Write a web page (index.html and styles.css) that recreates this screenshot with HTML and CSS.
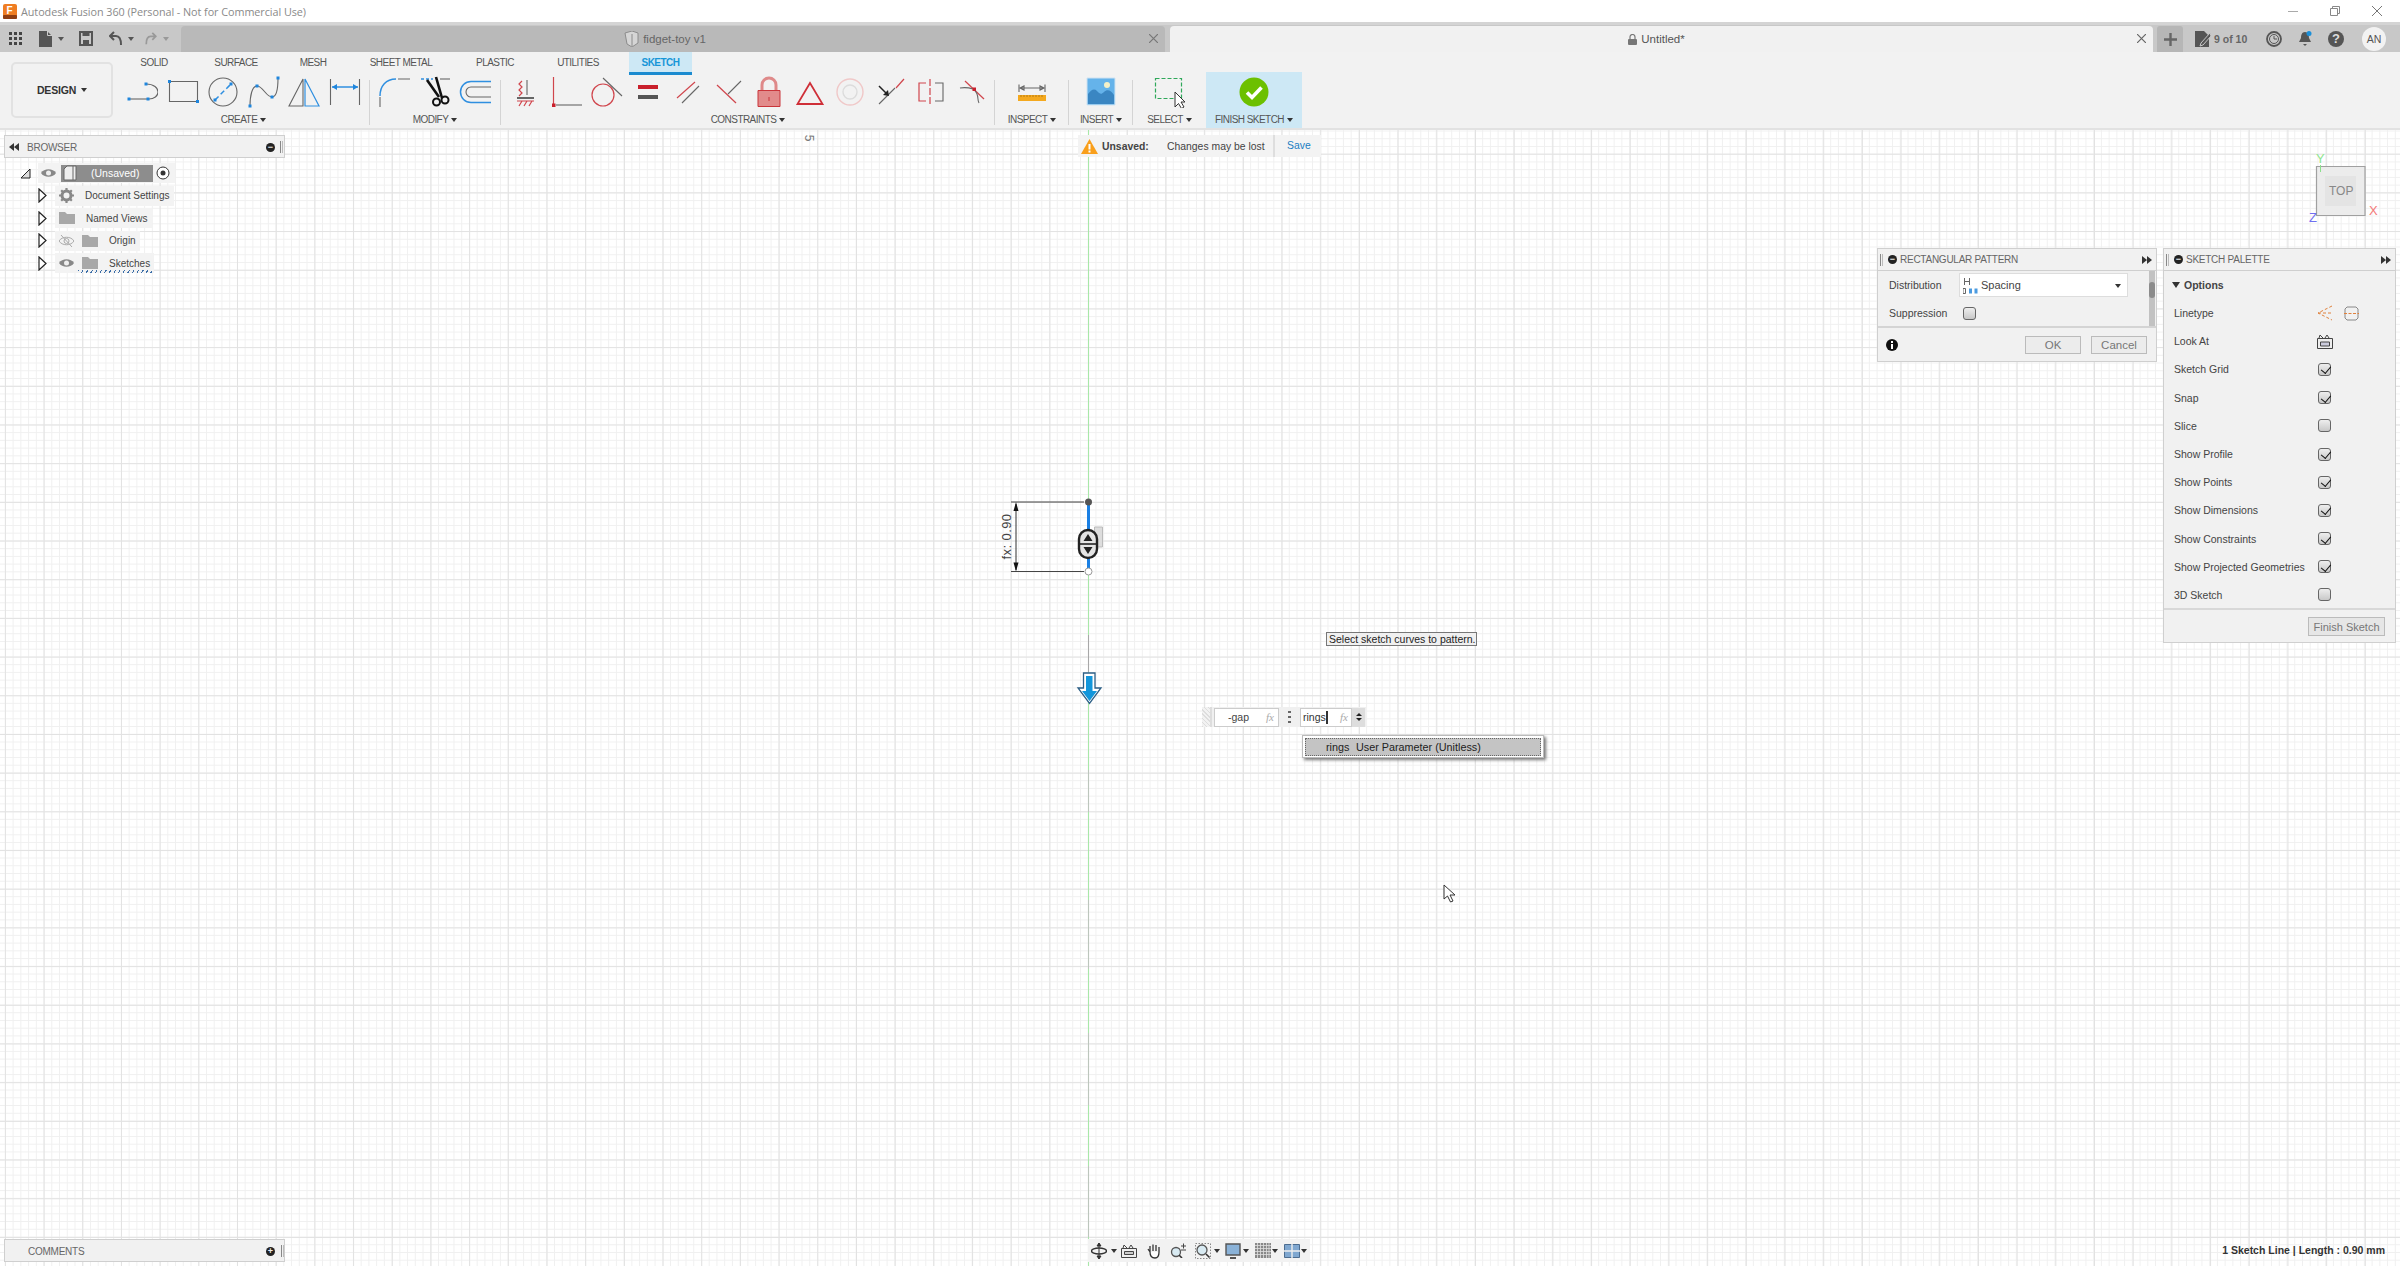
FILE: index.html
```html
<!DOCTYPE html>
<html lang="en">
<head>
<meta charset="utf-8">
<title>Autodesk Fusion 360</title>
<link rel="stylesheet" href="styles.css">
</head>
<body>
<div class="app">
  <header class="titlebar">
    <svg class="logo" width="14" height="15" viewBox="0 0 14 15"><rect width="14" height="15" rx="2" fill="#ef7d22"/><rect y="11" width="14" height="4" rx="1" fill="#8f3d12"/><text x="3.5" y="10" class="logo-f">F</text></svg>
    <span class="title-text">Autodesk Fusion 360 (Personal - Not for Commercial Use)</span>
    <div class="winctl">
      <svg width="10" height="10" viewBox="0 0 10 10"><path d="M0 5.5H10" stroke="#aaa" fill="none"/></svg>
      <svg width="10" height="10" viewBox="0 0 10 10"><path d="M.5 2.5h7v7h-7zM2.5 2.5v-2h7v7h-2" stroke="#888" fill="none"/></svg>
      <svg width="10" height="10" viewBox="0 0 10 10"><path d="M0 0L10 10M10 0L0 10" stroke="#777" fill="none"/></svg>
    </div>
  </header>

  <div class="tabstrip">
    <div class="qat">
      <svg class="q-grid" width="13" height="13" viewBox="0 0 13 13"><path d="M0 0h3v3H0zM5 0h3v3H5zM10 0h3v3h-3zM0 5h3v3H0zM5 5h3v3H5zM10 5h3v3h-3zM0 10h3v3H0zM5 10h3v3H5zM10 10h3v3h-3z" fill="#444"/></svg>
      <svg class="q-file" width="13" height="16" viewBox="0 0 13 16"><path d="M0 0h8l5 5v11H0z" fill="#555"/><path d="M8.500 0v4.500H13" stroke="#ccc" fill="none"/></svg>
      <span class="caret q-c1"></span>
      <svg class="q-save" width="14" height="15" viewBox="0 0 14 15"><path d="M1 1h12v13H1z" fill="none" stroke="#555" stroke-width="2"/><path d="M3.500 1h7v4h-7zM4 9h6v5H4z" fill="#555"/></svg>
      <svg class="q-undo" width="13" height="15" viewBox="0 0 13 15"><path d="M5 1L1 5l4 4M1 5h6c4 0 5 3 5 9" fill="none" stroke="#555" stroke-width="2"/></svg>
      <span class="caret q-c2"></span>
      <svg class="q-redo" width="12" height="13" viewBox="0 0 13 15"><path d="M8 1l4 4-4 4M12 5H6c-4 0-5 3-5 9" fill="none" stroke="#999" stroke-width="2"/></svg>
      <span class="caret caret-lt q-c3"></span>
    </div>
    <div class="doc-tab doc-inactive">
      <svg width="15" height="16" viewBox="0 0 15 16"><path d="M1 2l7-2 6 2v10l-6 4-5-3z" fill="#d5d5d5" stroke="#8c8c8c"/><path d="M8 3v12" stroke="#8c8c8c"/></svg>
      <span class="doc-name">fidget-toy v1</span>
      <svg class="doc-close" width="9" height="9" viewBox="0 0 9 9"><path d="M0 0L9 9M9 0L0 9" stroke="#777" stroke-width="1.2"/></svg>
    </div>
    <div class="doc-tab doc-active">
      <svg width="9" height="11" viewBox="0 0 9 11"><path d="M2 5V3a2.500 2.500 0 0 1 5 0v2" fill="none" stroke="#777" stroke-width="1.200"/><rect y="5" width="9" height="6" rx="1" fill="#777"/></svg>
      <span class="doc-name">Untitled*</span>
      <svg class="doc-close" width="9" height="9" viewBox="0 0 9 9"><path d="M0 0L9 9M9 0L0 9" stroke="#666" stroke-width="1.2"/></svg>
    </div>
    <div class="strip-right">
      <div class="plus-btn"><svg width="13" height="13" viewBox="0 0 13 13"><path d="M6.500 0v13M0 6.500h13" stroke="#666" stroke-width="2.400"/></svg></div>
      <svg class="s-doc" width="16" height="16" viewBox="0 0 16 16"><path d="M0 0h9l5 5v11H0z" fill="#555"/><path d="M15 2L6 12l-1 3 3-1 8-9z" fill="#555" stroke="#c6c6c6"/></svg>
      <span class="count">9 of 10</span>
      <svg class="s-clock" width="16" height="16" viewBox="0 0 16 16"><circle cx="8" cy="8" r="7" fill="none" stroke="#555" stroke-width="1.800"/><circle cx="8" cy="8" r="4.500" fill="none" stroke="#555"/><path d="M8 5v3h3" stroke="#555" fill="none"/></svg>
      <svg class="s-bell" width="14" height="16" viewBox="0 0 14 16"><path d="M7 1c3 0 4 3 4 6l2 4H1l2-4c0-3 1-6 4-6zM5 13h4l-2 2z" fill="#555"/><circle cx="11" cy="2.500" r="2.500" fill="#1b8fd8"/></svg>
      <svg class="s-help" width="16" height="16" viewBox="0 0 16 16"><circle cx="8" cy="8" r="8" fill="#555"/><text x="8" y="12" text-anchor="middle" class="help-q">?</text></svg>
      <span class="avatar">AN</span>
    </div>
  </div>

  <div class="ribbon">
    <button class="design">DESIGN<span class="caret caret-dk"></span></button>
    <div class="ribbon-main">
      <nav class="rtabs">
        <span class="rtab t-solid">SOLID</span>
        <span class="rtab t-surface">SURFACE</span>
        <span class="rtab t-mesh">MESH</span>
        <span class="rtab t-sheet">SHEET METAL</span>
        <span class="rtab t-plastic">PLASTIC</span>
        <span class="rtab t-util">UTILITIES</span>
        <span class="rtab t-sketch">SKETCH</span>
      </nav>
      <div class="groups">
        <section class="group g-create">
          <div class="tools">
            <svg class="tool" viewBox="0 0 32 32"><path d="M3 23H22" class="g"/><path d="M20 8C28 8 32 12 32 16S28 23 23 23" class="g"/><path d="M1.500 21.500h3v3h-3zM20.500 21.500h3v3h-3zM18.500 6.500h3v3h-3z" class="bf"/></svg>
            <svg class="tool" viewBox="0 0 32 32"><path d="M2.500 5.500h28v20h-28z" class="g"/><path d="M1 4h3v3H1zM29 24h3v3h-3z" class="bf"/></svg>
            <svg class="tool" viewBox="0 0 32 32"><circle cx="16" cy="16" r="14" class="g"/><path d="M8 24L24 8" class="b" stroke-dasharray="5 3"/><path d="M6.500 22.500h3v3h-3zM22.500 6.500h3v3h-3z" class="bf"/></svg>
            <svg class="tool" viewBox="0 0 32 32"><path d="M2 30C2 20 4 10 9 10C15 10 18 21 24 21C29 21 30 10 30 2" class="g"/><path d="M.5 28.500h3v3h-3zM7.500 8.500h3v3h-3zM22.500 19.500h3v3h-3zM28.500.5h3v3h-3z" class="bf"/></svg>
            <svg class="tool" viewBox="0 0 32 32"><path d="M15 3L1 30H15Z" class="g"/><path d="M17 3L31 30H17Z" class="b1"/></svg>
            <svg class="tool" viewBox="0 0 32 32"><path d="M1.500 3V29M30.500 3V29" class="g"/><path d="M3 11H29" class="b"/><path d="M3 11l5-3v6zM29 11l-5-3v6z" class="bf"/></svg>
          </div>
          <div class="glabel">CREATE<span class="caret caret-dk"></span></div>
        </section>
        <section class="group g-modify">
          <div class="tools">
            <svg class="tool" viewBox="0 0 32 32"><path d="M2 20C2 10 8 3 18 3" class="b"/><path d="M2 21V31M20 3H32" class="g"/></svg>
            <svg class="tool" viewBox="0 0 32 32"><path d="M2 3H14" class="b" stroke-dasharray="3 2"/><path d="M21 3H31" class="g"/><path d="M17 1L23 22M8 4L20 21" stroke="#111" stroke-width="2.600" fill="none"/><circle cx="17.500" cy="26" r="3.500" fill="none" stroke="#111" stroke-width="2"/><circle cx="26" cy="24" r="3.500" fill="none" stroke="#111" stroke-width="2"/></svg>
            <svg class="tool" viewBox="0 0 32 32"><path d="M32 5.500H12A10.500 10.500 0 0 0 12 26.500H32" class="b"/><path d="M32 11H12A5 5 0 0 0 12 21H32" class="g"/></svg>
          </div>
          <div class="glabel">MODIFY<span class="caret caret-dk"></span></div>
        </section>
        <section class="group g-constraints">
          <div class="tools">
            <svg class="tool" viewBox="0 0 32 32"><path d="M17 4V19" class="g"/><path d="M12 5l-3 3 3 3-3 3 3 3-3 3" class="r"/><path d="M7 22H24" class="gg"/><path d="M7 25H24M9 30l3-5M14 30l3-5M19 30l3-5" class="r"/></svg>
            <svg class="tool" viewBox="0 0 32 32"><path d="M2.500 1V29" class="r"/><path d="M5 29H31" class="g"/><path d="M1 27.500h3.500V31H1z" fill="#c9202c"/></svg>
            <svg class="tool" viewBox="0 0 32 32"><circle cx="12" cy="19" r="11" class="r"/><path d="M12 2L31 20" class="g"/></svg>
            <svg class="tool" viewBox="0 0 32 32"><path d="M6 9h20v4H6z" fill="#c9202c"/><path d="M6 19h20v4H6z" fill="#555"/></svg>
            <svg class="tool" viewBox="0 0 32 32"><path d="M5 22L23 6" class="r"/><path d="M10 27L27 10" class="g"/></svg>
            <svg class="tool" viewBox="0 0 32 32"><path d="M4 9L23 27" class="r"/><path d="M15 18L28 5" class="g"/></svg>
            <svg class="tool" viewBox="0 0 32 32"><path d="M9 15V9a7 7 0 0 1 14 0v6" fill="none" stroke="#df8a8a" stroke-width="3"/><path d="M5 14.500h22v16H5z" fill="#e28b8b" stroke="#c9353a"/><path d="M16 21v4" stroke="#c9353a"/></svg>
            <svg class="tool" viewBox="0 0 32 32"><path d="M16 7L3.500 28H28.500Z" class="r2"/></svg>
            <svg class="tool" viewBox="0 0 32 32"><circle cx="16" cy="16" r="13" fill="none" stroke="#f0c8c8" stroke-width="1.400"/><circle cx="16" cy="16" r="7" fill="none" stroke="#dcdcdc" stroke-width="1.400"/></svg>
            <svg class="tool" viewBox="0 0 32 32"><path d="M4 28L20 12" class="g"/><path d="M21 12L29 3" class="r"/><path d="M4 10L11 17" stroke="#222" stroke-width="1.500"/><path d="M14 20l-6-1 5-5z" fill="#222"/></svg>
            <svg class="tool" viewBox="0 0 32 32"><path d="M15 3V29" class="r" stroke-dasharray="7 2"/><path d="M11 7H4V25H11" class="r"/><path d="M20 7H28V25H20" class="g"/></svg>
            <svg class="tool" viewBox="0 0 32 32"><path d="M9 5L28 23" class="r"/><path d="M4 12C10 11 14 12 17 13M19 15C23 18 21 24 23 27" class="g"/><path d="M16.500 11.500h3.500v3.500h-3.500z" fill="#c9202c"/></svg>
          </div>
          <div class="glabel">CONSTRAINTS<span class="caret caret-dk"></span></div>
        </section>
        <section class="group g-inspect">
          <div class="tools one">
            <svg class="tool" viewBox="0 0 32 32"><path d="M3 8.500V16M29 8.500V16" class="g"/><path d="M4 12H28M4 12l4-2v4zM28 12l-4-2v4z" class="g"/><path d="M2 19h28v6H2z" fill="#f4a91f"/><path d="M5 19v2M8 19v2M11 19v2M14 19v2M17 19v2M20 19v2M23 19v2M26 19v2" stroke="#b67a12"/></svg>
          </div>
          <div class="glabel">INSPECT<span class="caret caret-dk"></span></div>
        </section>
        <section class="group g-insert">
          <div class="tools one">
            <svg class="tool" viewBox="0 0 32 32"><path d="M2 2h28v27H2z" fill="#65b3ea" stroke="#cfe3f2"/><path d="M3 28V18c3-4 6-6 9-3s4 4 7 1 7-2 10 3v9z" fill="#3a86c2"/><circle cx="22" cy="9" r="3" fill="#f5f1c8"/></svg>
          </div>
          <div class="glabel">INSERT<span class="caret caret-dk"></span></div>
        </section>
        <section class="group g-select">
          <div class="tools one">
            <svg class="tool" viewBox="0 0 32 32"><path d="M1.500 2.500H27.500V22.500H1.500Z" fill="none" stroke="#2fa85a" stroke-width="1.200" stroke-dasharray="4 2"/><path d="M21 16V31l3.500-3.500 3 5 2.500-1.500-3-5H31Z" fill="#fff" stroke="#333"/></svg>
          </div>
          <div class="glabel">SELECT<span class="caret caret-dk"></span></div>
        </section>
        <section class="group g-finish">
          <div class="tools one">
            <svg class="tool" viewBox="0 0 32 32"><circle cx="16" cy="16" r="14.500" fill="#6cc000"/><path d="M9 16.500L14 21.500L23.500 11.500" fill="none" stroke="#fff" stroke-width="3.600"/></svg>
          </div>
          <div class="glabel">FINISH SKETCH<span class="caret caret-dk"></span></div>
        </section>
      </div>
    </div>
  </div>

  <main class="canvas">
    <svg class="sketch" width="2400" height="1136" viewBox="0 130 2400 1136">
      <path d="M1088.500 130V1266" stroke="#a8e8a8"/>
      <path d="M1088.500 635V672" stroke="#a8a8a8"/>
      <path d="M1088.500 770V812M1088.500 900V969M1088.500 1033V1105M1088.500 1166V1237" stroke="#bcc6bc"/>
      <path d="M1011 502H1084M1011 571.500H1084" stroke="#444"/>
      <path d="M1016 504V570" stroke="#333"/>
      <path d="M1016 502l-2.500 9h5zM1016 571.500l-2.500-9h5z" fill="#111"/>
      <path d="M1088.500 502V571" stroke="#1a80e4" stroke-width="3"/>
      <circle cx="1088.500" cy="502" r="3.500" fill="#555"/>
      <circle cx="1088.500" cy="571.500" r="3.500" fill="#fff" stroke="#999"/>
      <path d="M1094.500 527h8v20h-8z" fill="#ddd" stroke="#bbb"/>
      <rect x="1079" y="530" width="18" height="28" rx="9" fill="#e4e4e4" stroke="#222" stroke-width="2.400"/>
      <path d="M1079 544H1097" stroke="#222" stroke-width="1.600"/>
      <path d="M1088 534l-4.500 7h9zM1088 554l-4.500-7h9z" fill="#222"/>
      <path d="M1083.500 673H1095V688H1101L1089.500 703.500L1078 688H1083.500Z" fill="#fff" stroke="#2d5f86" stroke-width="1.300"/>
      <path d="M1086 676H1092.500V691H1097L1089.500 701L1082 691H1086Z" fill="#1296db"/>
      <path d="M2316.500 166.500H2365V215.500H2316.500Z" fill="#ececec" stroke="#a0a0a0" stroke-width="1.200"/>
      <path d="M2325 176H2356V206H2325Z" fill="#e4e4e4"/>
      <path d="M2320.500 165V172" stroke="#8be08b"/>
    </svg>

    <span class="ruler-num">5</span>

    <section class="panel browser">
      <div class="panel-head">
        <svg class="rew" width="10" height="8" viewBox="0 0 10 8"><path d="M5 0L0 4l5 4zM10 0L5 4l5 4z" fill="#333"/></svg>
        <span class="panel-title">BROWSER</span>
        <span class="dot">&minus;</span>
        <span class="grip"></span>
      </div>
    </section>
    <ul class="tree">
      <li class="tree-row root">
        <svg class="twist" width="11" height="11" viewBox="0 0 11 11"><path d="M10 1V10H1Z" fill="#ddd" stroke="#222"/></svg>
        <div class="row-body">
          <svg class="eye" width="15" height="10" viewBox="0 0 15 10"><path d="M0 5C3 0 12 0 15 5C12 10 3 10 0 5Z" fill="#888"/><circle cx="7.500" cy="5" r="2.500" fill="#eee"/></svg>
          <span class="selected"><svg class="cube" width="16" height="16" viewBox="0 0 16 16"><path d="M1 4l3-3h9v14H1z" fill="#eee" stroke="#666"/><path d="M10 1v14" stroke="#666"/></svg><span class="sel-text">(Unsaved)</span></span>
          <svg class="target" width="14" height="14" viewBox="0 0 14 14"><circle cx="7" cy="7" r="6" fill="#fff" stroke="#333"/><circle cx="7" cy="7" r="2.500" fill="#333"/></svg>
        </div>
      </li>
      <li class="tree-row">
        <svg class="twist" width="9" height="15" viewBox="0 0 9 15"><path d="M1 1L8 7.500L1 14Z" fill="#fff" stroke="#222" stroke-width="1.200"/></svg>
        <div class="row-body">
          <svg class="gear" width="15" height="15" viewBox="0 0 15 15"><circle cx="7.500" cy="7.500" r="4.500" fill="none" stroke="#888" stroke-width="3"/><path d="M7.500 0v3M7.500 12v3M0 7.500h3M12 7.500h3M2.200 2.200l2 2M10.800 10.800l2 2M12.800 2.200l-2 2M4.200 10.800l-2 2" stroke="#888" stroke-width="2.200"/></svg>
          <span class="row-text">Document Settings</span>
        </div>
      </li>
      <li class="tree-row">
        <svg class="twist" width="9" height="15" viewBox="0 0 9 15"><path d="M1 1L8 7.500L1 14Z" fill="#fff" stroke="#222" stroke-width="1.200"/></svg>
        <div class="row-body">
          <svg class="folder" width="16" height="12" viewBox="0 0 16 12"><path d="M0 0h6l2 2h8v10H0z" fill="#a8a8a8"/></svg>
          <span class="row-text">Named Views</span>
        </div>
      </li>
      <li class="tree-row">
        <svg class="twist" width="9" height="15" viewBox="0 0 9 15"><path d="M1 1L8 7.500L1 14Z" fill="#fff" stroke="#222" stroke-width="1.200"/></svg>
        <div class="row-body">
          <svg class="eye2" width="15" height="12" viewBox="0 0 15 12"><path d="M0 6C3 1 12 1 15 6C12 11 3 11 0 6Z" fill="none" stroke="#aaa"/><circle cx="7.500" cy="6" r="2.500" fill="none" stroke="#aaa"/><path d="M2 0L13 12" stroke="#aaa"/></svg>
          <svg class="folder" width="16" height="12" viewBox="0 0 16 12"><path d="M0 0h6l2 2h8v10H0z" fill="#a8a8a8"/></svg>
          <span class="row-text">Origin</span>
        </div>
      </li>
      <li class="tree-row">
        <svg class="twist" width="9" height="15" viewBox="0 0 9 15"><path d="M1 1L8 7.500L1 14Z" fill="#fff" stroke="#222" stroke-width="1.200"/></svg>
        <div class="row-body wavy">
          <svg class="eye2" width="15" height="10" viewBox="0 0 15 10"><path d="M0 5C3 0 12 0 15 5C12 10 3 10 0 5Z" fill="#888"/><circle cx="7.500" cy="5" r="2.500" fill="#eee"/></svg>
          <svg class="folder" width="16" height="12" viewBox="0 0 16 12"><path d="M0 0h6l2 2h8v10H0z" fill="#a8a8a8"/></svg>
          <span class="row-text">Sketches</span>
        </div>
      </li>
    </ul>

    <section class="panel comments">
      <div class="panel-head">
        <span class="panel-title">COMMENTS</span>
        <span class="dot">+</span>
        <span class="grip"></span>
      </div>
    </section>

    <div class="banner">
      <svg width="17" height="15" viewBox="0 0 17 15"><path d="M8.500 0L17 15H0Z" fill="#f99f1b"/><path d="M7.500 5h2v5.500h-2zM7.500 11.500h2v2h-2z" fill="#fff"/></svg>
      <b class="ban-u">Unsaved:</b>
      <span class="ban-m">Changes may be lost</span>
      <span class="ban-s">Save</span>
    </div>

    <span class="vc vc-top">TOP</span>
    <span class="vc vc-y">Y</span>
    <span class="vc vc-x">X</span>
    <span class="vc vc-z">Z</span>

    <span class="dim-text">fx: 0.90</span>

    <section class="panel rect-pattern">
      <div class="panel-head">
        <span class="grip"></span>
        <span class="dot">&minus;</span>
        <span class="panel-title">RECTANGULAR PATTERN</span>
        <svg class="ff" width="10" height="8" viewBox="0 0 10 8"><path d="M0 0L5 4L0 8zM5 0L10 4L5 8z" fill="#333"/></svg>
      </div>
      <div class="rp-body">
        <div class="rp-fields">
          <div class="rp-row">
            <label class="rp-label">Distribution</label>
            <div class="select">
              <svg width="15" height="17" viewBox="0 0 15 17"><path d="M1.500 1v7M6.500 1v7M1.500 4.500h5" stroke="#666" fill="none"/><path d="M0 11.500h2.500v5H0z" fill="none" stroke="#666"/><path d="M6 11.500h3v5H6zM11.500 11.500h3v5h-3z" fill="#4a9ae0"/></svg>
              <span>Spacing</span>
              <span class="caret caret-dk sel-caret"></span>
            </div>
          </div>
          <div class="rp-row">
            <label class="rp-label">Suppression</label>
            <span class="cb cb-sup"></span>
          </div>
        </div>
        <div class="scroll"><span class="thumb"></span></div>
      </div>
      <div class="rp-foot">
        <svg width="12" height="12" viewBox="0 0 12 12"><circle cx="6" cy="6" r="6" fill="#111"/><path d="M5 5h2v5H5zM5 2h2v2H5z" fill="#fff"/></svg>
        <button class="btn btn-ok">OK</button>
        <button class="btn btn-cancel">Cancel</button>
      </div>
    </section>

    <section class="panel palette">
      <div class="panel-head">
        <span class="grip"></span>
        <span class="dot">&minus;</span>
        <span class="panel-title">SKETCH PALETTE</span>
        <svg class="ff" width="10" height="8" viewBox="0 0 10 8"><path d="M0 0L5 4L0 8zM5 0L10 4L5 8z" fill="#333"/></svg>
      </div>
      <div class="pal-body">
        <div class="pal-opt"><span class="opt-tri"></span><b>Options</b></div>
        <div class="pal-row"><span class="pal-label">Linetype</span>
          <svg class="pal-ic" width="16" height="16" viewBox="0 0 16 16"><path d="M15 1L1 8L15 15M1 8H15" fill="none" stroke="#e0813c" stroke-dasharray="3 2"/></svg>
          <svg class="pal-ic2" width="15" height="15" viewBox="0 0 15 15"><path d="M3 1h9l2 2v9l-2 2H3l-2-2V3z" fill="none" stroke="#888"/><path d="M0 7.500H15" stroke="#e0813c" stroke-dasharray="3 1.500"/></svg>
        </div>
        <div class="pal-row"><span class="pal-label">Look At</span>
          <svg class="pal-ic" width="16" height="15" viewBox="0 0 16 15"><path d="M.5 4.500h15v10H.5z" fill="#eee" stroke="#444"/><path d="M3.500 8h9v4h-9z" fill="#ccd" stroke="#444"/><path d="M2 4l1-3 3 3M8 4l2-3 2 3" stroke="#444" fill="none"/></svg>
        </div>
        <div class="pal-row"><span class="pal-label">Sketch Grid</span><span class="cb on"></span></div>
        <div class="pal-row"><span class="pal-label">Snap</span><span class="cb on"></span></div>
        <div class="pal-row"><span class="pal-label">Slice</span><span class="cb"></span></div>
        <div class="pal-row"><span class="pal-label">Show Profile</span><span class="cb on"></span></div>
        <div class="pal-row"><span class="pal-label">Show Points</span><span class="cb on"></span></div>
        <div class="pal-row"><span class="pal-label">Show Dimensions</span><span class="cb on"></span></div>
        <div class="pal-row"><span class="pal-label">Show Constraints</span><span class="cb on"></span></div>
        <div class="pal-row"><span class="pal-label">Show Projected Geometries</span><span class="cb on"></span></div>
        <div class="pal-row"><span class="pal-label">3D Sketch</span><span class="cb"></span></div>
      </div>
      <div class="pal-foot"><button class="btn btn-finish">Finish Sketch</button></div>
    </section>

    <div class="tooltip">Select sketch curves to pattern.</div>

    <div class="inputs">
      <span class="in-grip"></span>
      <div class="field f1"><span class="f-val">-gap</span><i>fx</i></div>
      <span class="vdots"></span>
      <div class="field f2"><span class="f-val2">rings</span><span class="text-cursor"></span><i>fx</i></div>
      <div class="spin"><span class="sp-up"></span><span class="sp-dn"></span></div>
    </div>
    <div class="suggest"><div class="sug-item"><span class="sug-a">rings</span><span class="sug-b">User Parameter (Unitless)</span></div></div>

    <svg class="mouse" width="14" height="19" viewBox="0 0 14 19"><path d="M1 1V15L4.500 12L7.500 18L10 17L7 11H12Z" fill="#fff" stroke="#333"/></svg>

    <div class="navbar">
      <svg class="n-ic" width="16" height="16" viewBox="0 0 16 16"><path d="M8 0v16M8 0l-2 3h4zM8 16l-2-3h4z" fill="#333" stroke="#333"/><ellipse cx="8" cy="8" rx="7.500" ry="3" fill="none" stroke="#333" stroke-width="1.400"/></svg>
      <span class="caret caret-dk n-c1"></span>
      <svg class="n-ic" width="16" height="14" viewBox="0 0 16 14"><path d="M.5 4.500h15v9H.5z" fill="#eee" stroke="#444"/><path d="M3.500 7.500h9v3h-9z" fill="#ccc" stroke="#444"/><path d="M2 4l1-3 3 3M8 4l2-3 2 3" stroke="#444" fill="none"/></svg>
      <svg class="n-ic n-hand" width="15" height="16" viewBox="0 0 15 16"><path d="M3 9L1 6M3 9V3M6 8V1.500M9 8V2M12 9V4M3 9c0 4 2 6 5 6s4-2 4-6" fill="#fff" stroke="#333" stroke-width="1.300"/></svg>
      <svg class="n-ic n-zoom" width="16" height="15" viewBox="0 0 16 15"><circle cx="6" cy="9" r="4.500" fill="#d8eaf2" stroke="#555" stroke-width="1.300"/><path d="M9 12l3 3" stroke="#333" stroke-width="1.600"/><path d="M11 3h5M13.500 .5v5M11 7h5" stroke="#444"/></svg>
      <svg class="n-ic n-fit" width="16" height="16" viewBox="0 0 16 16"><path d="M.5 .5h15v15H.5z" fill="none" stroke="#888" stroke-dasharray="1.500 1.500"/><circle cx="7" cy="7" r="5" fill="#d8eaf2" stroke="#555" stroke-width="1.300"/><path d="M11 11l3.500 3.500" stroke="#333" stroke-width="1.600"/></svg>
      <span class="caret caret-dk n-c2"></span>
      <svg class="n-ic" width="16" height="16" viewBox="0 0 16 16"><path d="M1 1h14v11H1z" fill="#8ab2d8" stroke="#555" stroke-width="1.400"/><path d="M5 15h6" stroke="#555" stroke-width="2"/></svg>
      <span class="caret caret-dk n-c3"></span>
      <svg class="n-ic" width="16" height="15" viewBox="0 0 16 15"><path d="M0 0h16v15H0z" fill="#888"/><path d="M2.500 0v15M5.500 0v15M8.500 0v15M11.500 0v15M14 0v15M0 2.500h16M0 5.500h16M0 8.500h16M0 11.500h16" stroke="#e0e0e0" stroke-width=".8"/></svg>
      <span class="caret caret-dk n-c4"></span>
      <svg class="n-ic" width="16" height="14" viewBox="0 0 16 14"><path d="M.5 .5h15v13H.5z" fill="#7fa7d0" stroke="#4d6d90"/><path d="M8 0v14M0 7h16" stroke="#eee" stroke-width="1.400"/></svg>
      <span class="caret caret-dk n-c4"></span>
    </div>

    <span class="status">1 Sketch Line | Length : 0.90 mm</span>
  </main>
</div>
</body>
</html>
```
FILE: styles.css
```css
* { box-sizing: border-box; }
html, body { margin: 0; padding: 0; }
body { font-family: "Liberation Sans", Arial, sans-serif; color: #444; background: #fff; overflow: hidden; }
.app { width: 2400px; height: 1266px; display: flex; flex-direction: column; overflow: hidden; }
button { font-family: inherit; }

.caret { display: inline-block; width: 0; height: 0; border-left: 3px solid transparent; border-right: 3px solid transparent; border-top: 4px solid #555; flex: none; }
.caret-dk { border-top-color: #333; }
.caret-lt { border-top-color: #999; }

/* title bar */
.titlebar { height: 22px; background: #fff; display: flex; align-items: center; padding-left: 3px; flex: none; }
.logo { flex: none; }
.logo-f { font: bold 10px "Liberation Sans", sans-serif; fill: #fff; }
.title-text { margin-left: 4px; font: 10.8px "Open Sans", sans-serif; color: #8a8a8a; letter-spacing: -.05px; }
.winctl { margin-left: auto; margin-right: 18px; display: flex; gap: 32px; }

/* strip */
.tabstrip { height: 30px; background: #c8c8c8; border-top: 3px solid #d4d4d4; display: flex; align-items: flex-end; flex: none; }
.qat { width: 181px; height: 27px; position: relative; flex: none; display: flex; align-items: center; padding-left: 9px; }
.q-file { margin-left: 17px; }
.q-c1 { margin-left: 6px; }
.q-save { margin-left: 15px; }
.q-undo { margin-left: 16px; }
.q-c2 { margin-left: 6px; }
.q-redo { margin-left: 11px; }
.q-c3 { margin-left: 6px; }
.doc-tab { height: 26px; border-radius: 4px 4px 0 0; display: flex; align-items: center; justify-content: center; position: relative; font: 11.5px "Liberation Sans", sans-serif; flex: none; }
.doc-inactive { width: 984px; background: #b9b9b9; color: #666; padding-right: 16px; }
.doc-active { width: 983px; margin-left: 5px; background: #f1f1f1; color: #555; padding-right: 10px; }
.doc-name { margin-left: 4px; }
.doc-close { position: absolute; right: 7px; top: 8px; }
.strip-right { flex: 1; height: 27px; display: flex; align-items: center; }
.plus-btn { width: 26px; height: 26px; margin-left: 4px; margin-top: 1px; background: #b6b6b6; border-radius: 3px 3px 0 0; display: flex; align-items: center; justify-content: center; flex: none; }
.s-doc { margin-left: 12px; flex: none; }
.count { margin-left: 3px; font: bold 10.5px "Liberation Sans", sans-serif; color: #666; width: 34px; white-space: nowrap; flex: none; }
.s-clock { margin-left: 18px; flex: none; }
.s-bell { margin-left: 16px; flex: none; }
.s-help { margin-left: 16px; flex: none; }
.avatar { margin-left: 18px; width: 24px; height: 24px; border-radius: 50%; background: #f2f2f2; color: #555; font-size: 10.5px; display: flex; align-items: center; justify-content: center; flex: none; }
.help-q { font: bold 13px "Liberation Sans", sans-serif; fill: #ddd; }

/* ribbon */
.ribbon { height: 78px; background: #f2f2f2; border-bottom: 2px solid #e2e2e2; display: flex; flex: none; }
.design { width: 102px; height: 56px; margin: 10px 0 0 11px; background: #f2f2f2; border: 2px solid #e2e2e2; border-radius: 5px; font-size: 10.5px; letter-spacing: -.2px; color: #333; font-weight: bold; flex: none; display: flex; align-items: center; justify-content: center; gap: 5px; padding: 0; }
.ribbon-main { margin-left: 9px; flex: 1; display: flex; flex-direction: column; position: relative; }
.rtabs { height: 23px; display: flex; font-size: 10px; letter-spacing: -.55px; color: #555; flex: none; }
.rtab { display: flex; align-items: flex-start; justify-content: center; padding-top: 5px; height: 23px; white-space: nowrap; flex: none; }
.t-solid { width: 50px; margin-left: 7px; }
.t-surface { width: 56px; margin-left: 29px; }
.t-mesh { width: 40px; margin-left: 29px; }
.t-sheet { width: 70px; margin-left: 33px; }
.t-plastic { width: 44px; margin-left: 37px; }
.t-util { width: 46px; margin-left: 38px; }
.t-sketch { width: 63px; margin-left: 28px; background: #cde8f5; border-bottom: 3px solid #1b8bd0; color: #1796d8; font-weight: bold; }
.groups { flex: 1; display: flex; min-height: 0; }
.group { display: flex; flex-direction: column; height: 50px; position: relative; flex: none; }
.group::after { content: ""; position: absolute; right: 0; top: 5px; height: 45px; width: 1px; background: #d4d4d4; }
.g-finish::after, .g-select::after { display: none; }
.tools { height: 32px; margin-top: 1px; display: flex; flex: none; }
.tools.one { justify-content: center; }
.tool { width: 32px; height: 32px; margin: 0 4.25px; flex: none; fill: none; }
.tools.one .tool { margin: 0; }
.g { fill: none; stroke: #666; stroke-width: 1.100; }
.gg { fill: none; stroke: #666; stroke-width: 2; }
.b { fill: none; stroke: #2f8fe0; stroke-width: 1.500; }
.b1 { fill: none; stroke: #2f8fe0; stroke-width: 1.200; }
.bf { fill: #1f86dd; stroke: none; }
.r { fill: none; stroke: #d0454c; stroke-width: 1.200; }
.r2 { fill: none; stroke: #cf2f38; stroke-width: 1.800; }
.glabel { font-size: 10px; letter-spacing: -.55px; color: #555; text-align: center; line-height: 12px; margin-top: 6px; display: flex; justify-content: center; align-items: center; gap: 3px; white-space: nowrap; }
.g-create { width: 248px; padding-right: 5px; }
.g-modify { width: 131px; padding-left: 4px; padding-right: 5px; }
.g-constraints { width: 494px; padding-left: 5px; }
.g-constraints .glabel { padding-right: 5px; }
.g-inspect { width: 74px; }
.g-insert { width: 64px; }
.g-select { width: 73px; }
.g-finish { width: 96px; height: 56px; margin-top: -3px; background: #cde8f5; padding-top: 3px; }

/* canvas */
.canvas { flex: 1; position: relative; overflow: hidden; background-color: #fff;
  background-image:
    linear-gradient(90deg, #e2e2e2 1px, transparent 1px),
    linear-gradient(#e2e2e2 1px, transparent 1px),
    linear-gradient(90deg, #f0f0f0 1px, transparent 1px),
    linear-gradient(#f0f0f0 1px, transparent 1px);
  background-size: 38.7px 38.7px, 38.7px 38.7px, 7.74px 7.74px, 7.74px 7.74px;
  background-position: 4.9px 0, 0 23.7px, 4.9px 0, 0 .5px;
}
.sketch { position: absolute; left: 0; top: 0; }
.ruler-num { position: absolute; left: 806px; top: 1px; font-size: 12px; color: #777; transform: rotate(90deg); }

.panel { position: absolute; background: #f1f1f1; border: 1px solid #cfcfcf; }
.panel-head { height: 22px; display: flex; align-items: center; position: relative; border-bottom: 1px solid #cfcfcf; }
.panel-title { font-size: 10px; color: #666; letter-spacing: -.25px; white-space: nowrap; }
.dot { width: 9px; height: 9px; border-radius: 50%; background: #222; color: #eee; font: bold 9px/8px "Liberation Sans", sans-serif; text-align: center; display: block; flex: none; }
.grip { width: 3px; height: 12px; border-left: 1px solid #888; border-right: 1px solid #bbb; flex: none; }
.browser { left: 4px; top: 5px; width: 281px; height: 23px; }
.browser .panel-head { padding-left: 4px; border-bottom: 0; }
.browser .panel-title { margin-left: 8px; }
.browser .dot { margin-left: auto; }
.browser .grip { margin: 0 1px 0 5px; }
.comments { left: 4px; top: 1109px; width: 281px; height: 23px; }
.comments .panel-head { border-bottom: 0; }
.comments .panel-title { margin-left: 23px; }
.comments .dot { margin-left: auto; }
.comments .grip { margin: 0 0 0 6px; }

.tree { position: absolute; left: 0; top: 32px; margin: 0; padding: 0; list-style: none; font-size: 10px; color: #444; }
.tree-row { height: 22.5px; display: flex; align-items: center; padding-left: 38px; }
.tree-row.root { padding-left: 20px; }
.twist { flex: none; margin-right: 8px; }
.root .twist { margin-right: 7px; }
.row-body { height: 20px; background: #f3f3f3; display: flex; align-items: center; padding: 0 4px; position: relative; }
.row-text { margin-left: 11px; white-space: nowrap; font-size: 10px; }
.root .row-body { padding: 0 5px 0 3px; width: 137px; }
.selected { width: 92px; height: 17px; margin-left: 5px; background: #8d8d8d; display: flex; align-items: center; }
.cube { margin-left: 2px; flex: none; }
.sel-text { margin-left: 12px; color: #fff; font-size: 10.5px; }
.target { margin-left: 3px; }
.eye2 { margin-right: 8px; }
.wavy::after { content: ""; position: absolute; left: 23px; right: 2px; bottom: 0; height: 3px; background: repeating-linear-gradient(120deg, #3b6ea8 0 1px, transparent 1px 4px); }

.banner { position: absolute; left: 1078px; top: 5px; width: 243px; height: 22px; background: #f3f3f3; display: flex; align-items: center; padding-left: 3px; font-size: 10.4px; color: #444; }
.ban-u { margin-left: 4px; width: 46px; white-space: nowrap; }
.ban-m { margin-left: 19px; width: 106px; white-space: nowrap; }
.ban-s { height: 22px; border-left: 2px solid #dedede; padding-left: 12px; line-height: 22px; color: #1b7ec2; }

.vc { position: absolute; font-size: 13px; }
.vc-top { left: 2329px; top: 54px; color: #888; font-size: 12px; }
.vc-y { left: 2316px; top: 21px; color: #8fe68f; }
.vc-x { left: 2369px; top: 73px; color: #f47a7a; }
.vc-z { left: 2309px; top: 80px; color: #6f6ff0; }
.dim-text { position: absolute; left: 983px; top: 399px; width: 46px; text-align: center; font-size: 13px; letter-spacing: .4px; color: #444; transform: rotate(-90deg); white-space: nowrap; }

.rect-pattern { left: 1877px; top: 118px; width: 280px; height: 114px; }
.rect-pattern .panel-head, .palette .panel-head { padding-left: 2px; }
.rect-pattern .dot, .palette .dot { margin-left: 5px; }
.rect-pattern .panel-title, .palette .panel-title { margin-left: 3px; }
.ff { margin-left: auto; margin-right: 4px; }
.rp-body { height: 57px; display: flex; border-bottom: 2px solid #d4d4d4; }
.rp-fields { flex: 1; padding: 0 0 0 11px; }
.rp-row { display: flex; align-items: center; height: 28px; font-size: 10.5px; }
.rp-label { width: 70px; }
.select { width: 169px; height: 24px; background: #fff; border: 1px solid #ddd; display: flex; align-items: center; padding-left: 3px; gap: 3px; position: relative; font-size: 11px; }
.sel-caret { position: absolute; right: 6px; top: 10px; }
.cb { display: inline-block; width: 13px; height: 13px; border: 1px solid #666; border-radius: 3px; background: linear-gradient(#eee, #c8c8c8); position: relative; flex: none; }
.cb.on::after { content: ""; position: absolute; left: 3.5px; top: .5px; width: 4.5px; height: 8px; border-right: 1.4px solid #111; border-bottom: 1.4px solid #111; transform: rotate(40deg); }
.cb-sup { margin-left: 4px; }
.scroll { width: 6px; margin-right: 1px; background: #c2c2c2; position: relative; flex: none; }
.thumb { position: absolute; left: 0; top: 11px; width: 6px; height: 16px; border-radius: 3px; background: #8c8c8c; }
.rp-foot { display: flex; align-items: center; padding: 8px 9px 0 8px; gap: 10px; }
.btn { background: #ececec; border: 1px solid #bbb; color: #777; font-size: 11.5px; padding: 0; height: 18px; }
.btn-ok { width: 56px; margin-left: auto; }
.btn-cancel { width: 56px; }

.palette { left: 2163px; top: 118px; width: 233px; height: 395px; }
.pal-body { padding: 0 0 0 10px; height: 339px; border-bottom: 2px solid #d8d8d8; }
.pal-opt { height: 28px; display: flex; align-items: center; font-size: 10.5px; color: #444; }
.opt-tri { width: 0; height: 0; border-left: 4px solid transparent; border-right: 4px solid transparent; border-top: 6px solid #333; margin-right: 4px; margin-left: -2px; }
.pal-row { height: 28.2px; display: flex; align-items: center; font-size: 10.5px; color: #444; }
.pal-label { width: 144px; white-space: nowrap; }
.pal-ic { flex: none; margin-left: -1px; }
.pal-ic2 { margin-left: 11px; }
.pal-foot { display: flex; justify-content: flex-end; padding: 7px 10px 0 0; }
.btn-finish { width: 77px; height: 19px; font-size: 11px; background: #e6e6e6; }

.tooltip { position: absolute; left: 1326px; top: 502px; width: 151px; height: 14px; background: #f0f0f0; border: 1px solid #777; font-size: 10.5px; line-height: 12px; color: #222; padding-left: 2px; white-space: nowrap; }
.inputs { position: absolute; left: 1202px; top: 577px; width: 164px; height: 20px; background: #f0f0f0; display: flex; align-items: center; }
.in-grip { width: 10px; height: 20px; background: repeating-linear-gradient(45deg, #ddd 0 1px, #f2f2f2 1px 3px); border-right: 2px solid #ddd; }
.field { height: 19px; background: #fff; border: 1px solid #ccc; font-size: 10.5px; position: relative; display: flex; align-items: center; color: #444; }
.field i { position: absolute; right: 4px; color: #aaa; font-family: "Liberation Serif", serif; font-size: 11px; }
.f1 { width: 65px; margin-left: 2px; }
.f-val { margin-left: 13px; }
.vdots { width: 3px; height: 12px; margin: 0 9px; background: repeating-linear-gradient(#666 0 2px, transparent 2px 5px); }
.f2 { width: 52px; }
.f-val2 { margin-left: 2px; color: #333; }
.text-cursor { width: 2px; height: 13px; background: #333; }
.f2 i { right: 3px; }
.spin { width: 13px; height: 19px; background: #ddd; display: flex; flex-direction: column; align-items: center; justify-content: center; gap: 2px; }
.sp-up { width: 0; height: 0; border: 3px solid transparent; border-top: 0; border-bottom: 3px solid #222; }
.sp-dn { width: 0; height: 0; border: 3px solid transparent; border-bottom: 0; border-top: 3px solid #222; }
.suggest { position: absolute; left: 1302px; top: 605px; width: 242px; height: 23px; background: #fff; border: 1px solid #bbb; padding: 2px; box-shadow: 2px 2px 3px #777; }
.sug-item { height: 18px; background: #c4c4c4; border: 1px dotted #666; display: flex; align-items: center; font-size: 10.8px; color: #222; }
.sug-a { margin-left: 20px; width: 30px; }
.mouse { position: absolute; left: 1443px; top: 754px; }

.navbar { position: absolute; left: 1088px; top: 1109px; width: 222px; height: 23px; background: #f2f2f2; display: flex; align-items: center; padding-left: 3px; }
.n-ic { flex: none; }
.n-c1 { margin: 0 4px; }
.n-c2 { margin: 0 5px 0 3px; }
.n-c3 { margin: 0 6px 0 2px; }
.n-c4 { margin: 0 6px 0 1px; }
.n-hand { margin-left: 10px; }
.n-zoom { margin-left: 8px; }
.n-fit { margin-left: 9px; }
.status { position: absolute; right: 15px; top: 1114px; font-size: 10.5px; font-weight: bold; color: #333; }
```
